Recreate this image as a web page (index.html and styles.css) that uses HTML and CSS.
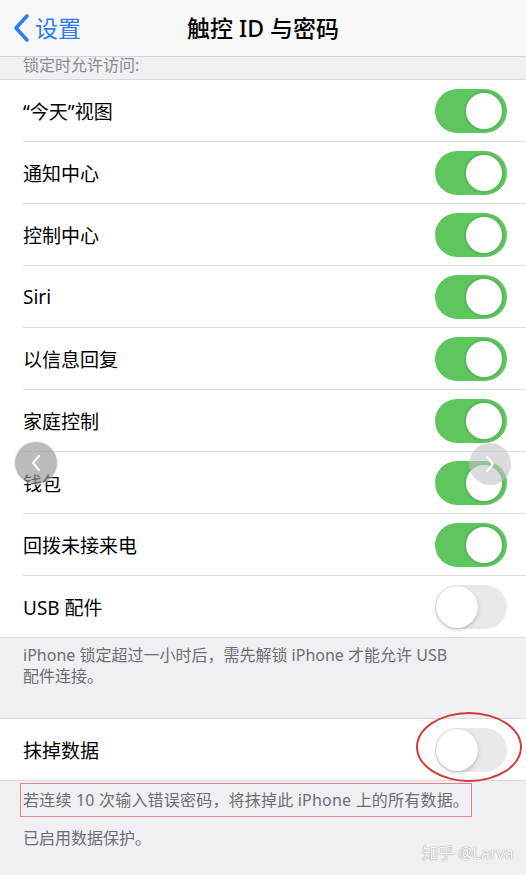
FILE: index.html
```html
<!DOCTYPE html>
<html lang="zh-CN">
<head>
  <meta charset="UTF-8">
  <meta name="viewport" content="width=device-width, initial-scale=1.0">
  <title>触控 ID 与密码</title>
  <link rel="stylesheet" href="styles.css">
</head>
<body>

  <div class="screen">
    <div class="navbar">
      <div class="back">
        <svg class="chevron" width="18" height="30" viewBox="0 0 18 30">
          <path d="M15 3 L4 15 L15 27" fill="none" stroke="#2f7cf6" stroke-width="3.6" stroke-linecap="round" stroke-linejoin="round"/>
        </svg>
        <span>设置</span>
      </div>
      <div class="title">触控 ID 与密码</div>
    </div>

    <div class="group-header"><span>锁定时允许访问:</span></div>

    <div class="group">
      <div class="row"><span>“今天”视图</span><div class="switch on"></div></div>
      <div class="row"><span>通知中心</span><div class="switch on"></div></div>
      <div class="row"><span>控制中心</span><div class="switch on"></div></div>
      <div class="row"><span>Siri</span><div class="switch on"></div></div>
      <div class="row"><span>以信息回复</span><div class="switch on"></div></div>
      <div class="row"><span>家庭控制</span><div class="switch on"></div></div>
      <div class="row"><span>钱包</span><div class="switch on"></div></div>
      <div class="row"><span>回拨未接来电</span><div class="switch on"></div></div>
      <div class="row"><span>USB 配件</span><div class="switch"></div></div>
    </div>

    <div class="group-footer">iPhone 锁定超过一小时后，需先解锁 iPhone 才能允许 USB 配件连接。</div>

    <div class="group">
      <div class="row"><span>抹掉数据</span><div class="switch circled"></div></div>
    </div>

    <div class="group-footer short">
      <span class="boxed">若连续 10 次输入错误密码，将抹掉此 iPhone 上的所有数据。</span>
    </div>
    <div class="group-footer note">已启用数据保护。</div>

    <div class="pager left">
      <svg width="14" height="20" viewBox="0 0 14 20"><path d="M10 3 L4 10 L10 17" fill="none" stroke="#fff" stroke-width="2" stroke-linecap="round" stroke-linejoin="round"/></svg>
    </div>
    <div class="pager right">
      <svg width="14" height="20" viewBox="0 0 14 20"><path d="M4 3 L10 10 L4 17" fill="none" stroke="#fff" stroke-width="2" stroke-linecap="round" stroke-linejoin="round"/></svg>
    </div>
    <div class="watermark">知乎 @Larva</div>
  </div>

</body>
</html>
```

FILE: styles.css
```css
body {
  margin: 0;
  padding: 0;
  background-color: #efeff4;
  font-family: "Noto Sans", "Noto Sans CJK SC", sans-serif;
  color: #000;
}
.screen {
  position: relative;
  width: 526px;
  height: 875px;
  overflow: hidden;
  background-color: #efeff4;
}
.navbar {
  height: 56px;
  background-color: #f8f8f8;
  border-bottom: 1px solid #d4d4d8;
  display: flex;
  align-items: center;
  position: relative;
}
.back {
  display: flex;
  align-items: center;
  gap: 5px;
  padding-left: 12px;
  color: #2f7cf6;
  font-size: 23px;
  line-height: 1;
}
.title {
  position: absolute;
  left: 0;
  right: 0;
  text-align: center;
  font-size: 23px;
  font-weight: 500;
  line-height: 56px;
  pointer-events: none;
}
.group-header {
  height: 22px;
  display: flex;
  align-items: flex-end;
  padding-left: 23px;
  color: #8a8a8f;
  font-size: 16px;
}
.group-header span {
  line-height: 16px;
  margin-bottom: 6px;
}
.group {
  background-color: #fff;
  border-top: 1px solid #d9d9dc;
  border-bottom: 1px solid #d9d9dc;
  padding-left: 23px;
}
.row {
  height: 62px;
  display: flex;
  align-items: center;
  justify-content: space-between;
  padding-right: 19px;
  border-bottom: 1px solid #dedee0;
  box-sizing: border-box;
  font-size: 19px;
}
.row:last-child {
  border-bottom: none;
  height: 61px;
}
.switch {
  position: relative;
  width: 72px;
  height: 44px;
  border-radius: 22px;
  background-color: #e9e9ea;
}
.switch::after {
  content: "";
  position: absolute;
  top: 1px;
  left: 1px;
  width: 42px;
  height: 42px;
  border-radius: 50%;
  background-color: #fff;
  box-shadow: 0 2px 4px rgba(0, 0, 0, 0.18), 0 0 1px rgba(0, 0, 0, 0.15);
}
.switch.on {
  background-color: #5fc55f;
}
.switch.on::after {
  left: 29px;
  top: 2px;
  width: 36px;
  height: 36px;
  border: 2px solid #58b85a;
  box-shadow: none;
}
.switch.circled::before {
  content: "";
  position: absolute;
  left: -19px;
  top: -16px;
  width: 106px;
  height: 70px;
  border: 2.5px solid #cf3a3a;
  border-radius: 50%;
  box-sizing: border-box;
}
.group-footer {
  padding: 7px 68px 31px 23px;
  color: #6d6d72;
  font-size: 16px;
  line-height: 21px;
}
.group-footer.short {
  padding: 2px 0 0 20px;
}
.group-footer.note {
  padding: 11px 0 0 23px;
}
.boxed {
  display: inline-block;
  padding: 6px 2px 5px 2px;
  border: 1px solid #e08585;
  line-height: 21px;
  letter-spacing: 0.2px;
}
.pager {
  position: absolute;
  width: 42px;
  height: 42px;
  border-radius: 50%;
  display: flex;
  align-items: center;
  justify-content: center;
}
.pager.left {
  left: 15px;
  top: 442px;
  background-color: rgba(150, 150, 155, 0.65);
  box-shadow: 0 0 0 1px rgba(220, 220, 220, 0.6);
}
.pager.right {
  left: 469px;
  top: 443px;
  background-color: rgba(195, 195, 200, 0.6);
}
.watermark {
  position: absolute;
  left: 422px;
  top: 840px;
  font-size: 16px;
  color: #fafafa;
  text-shadow: 0 0 1px #9a9a9a, 0 0 1px #9a9a9a;
}
```
